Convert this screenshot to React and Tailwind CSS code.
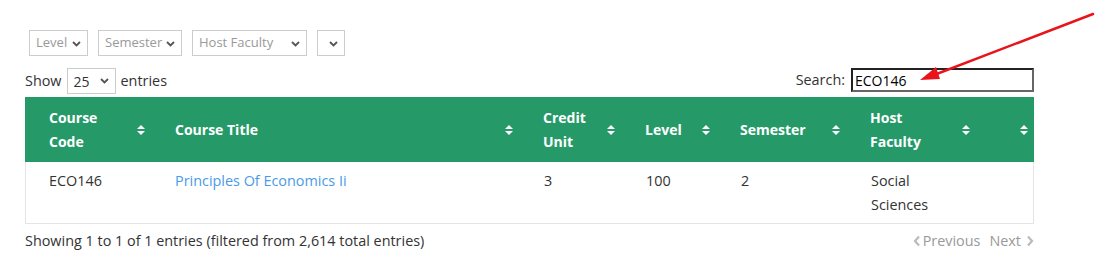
import React from "react";

const Chevron = ({ className = "" }) => (
  <svg width="9" height="6" viewBox="0 0 9 6" className={className}>
    <path d="M1 1 L4.5 4.5 L8 1" fill="none" stroke="#555" strokeWidth="1.8" />
  </svg>
);

const SortIcon = () => (
  <svg width="8" height="10" viewBox="0 0 8 10" className="shrink-0">
    <polygon points="4,0 8,4 0,4" fill="#fff" />
    <polygon points="0,6 8,6 4,10" fill="#fff" />
  </svg>
);

const FilterSelect = ({ label, w }) => (
  <div
    className={`flex h-[26px] items-center justify-between border border-[#cccccc] bg-white pl-[6px] pr-[6px] text-[13px] text-[#999] ${w}`}
  >
    <span>{label}</span>
    <Chevron className="mt-[1px]" />
  </div>
);

const cols = "grid-cols-[126px_368px_102px_95px_130px_130px_58px]";

const headers = ["Course Code", "Course Title", "Credit Unit", "Level", "Semester", "Host Faculty", ""];

export default function App() {
  return (
    <div
      className="relative h-[262px] w-[1117px] bg-white text-[14.4px] text-[#333]"
      style={{ fontFamily: '"Open Sans", sans-serif' }}
    >
      <div className="pl-[25px] pt-[30px]">
        <div className="ml-[4px] flex gap-[10px]">
          <FilterSelect label="Level" w="w-[59px]" />
          <FilterSelect label="Semester" w="w-[84px]" />
          <FilterSelect label="Host Faculty" w="w-[115px]" />
          <FilterSelect label="" w="w-[28px]" />
        </div>

        <div className="mt-[12px] flex w-[1009px] items-start justify-between">
          <div className="flex h-[26px] items-center">
            <span>Show</span>
            <div className="mx-[5px] flex h-[26px] w-[49px] items-center justify-between border border-[#cccccc] pl-[6px] pr-[6px] text-[14px]">
              <span className="text-[#333]">25</span>
              <Chevron />
            </div>
            <span>entries</span>
          </div>
          <div className="flex h-[24px] items-center">
            <span className="mr-[6px]">Search:</span>
            <div className="flex h-[24px] w-[183px] items-center border-2 border-t-[#222] border-l-[#222] border-r-[#666] border-b-[#666] pl-[2px] text-[14px] text-[#000]">
              ECO146
            </div>
          </div>
        </div>

        <div className="mt-[3px] w-[1009px]">
          <div className={`grid ${cols} h-[65px] bg-[#259a68] text-[14px] font-bold text-white`}>
            {headers.map((h, i) => (
              <div key={i} className="flex items-center pl-[24px] pr-[6px] leading-[24px]">
                <div className="min-w-0 flex-1">{h}</div>
                <div className="ml-[16px]">
                  <SortIcon />
                </div>
              </div>
            ))}
          </div>
          <div className={`grid ${cols} border-x border-b border-[#e5e5e5] pb-[6px] pt-[7px] leading-[24px]`}>
            <div className="pl-[23px]">ECO146</div>
            <div className="pl-[23px] text-[#4a9ae8]">Principles Of Economics Ii</div>
            <div className="pl-[24px]">3</div>
            <div className="pl-[24px]">100</div>
            <div className="pl-[24px]">2</div>
            <div className="pl-[24px] pr-[40px]">Social Sciences</div>
            <div></div>
          </div>
        </div>

        <div className="mt-[5px] flex w-[1009px] items-center justify-between leading-[24px]">
          <span>Showing 1 to 1 of 1 entries (filtered from 2,614 total entries)</span>
          <div className="flex items-center text-[#999]">
            <svg width="8" height="12" viewBox="0 0 8 12" className="mr-[2px]">
              <path d="M6 1.5 L2 6 L6 10.5" fill="none" stroke="#bbb" strokeWidth="2.2" />
            </svg>
            <span>Previous</span>
            <span className="ml-[9px]">Next</span>
            <svg width="8" height="12" viewBox="0 0 8 12" className="ml-[5px]">
              <path d="M2 1.5 L6 6 L2 10.5" fill="none" stroke="#bbb" strokeWidth="2.2" />
            </svg>
          </div>
        </div>
      </div>

      <svg className="pointer-events-none absolute left-0 top-0" width="1117" height="262">
        <line x1="1093" y1="14" x2="934" y2="75" stroke="#e8141b" strokeWidth="2.5" strokeLinecap="round" />
        <polygon points="920,80 936,67 940,79" fill="#e8141b" />
      </svg>
    </div>
  );
}
